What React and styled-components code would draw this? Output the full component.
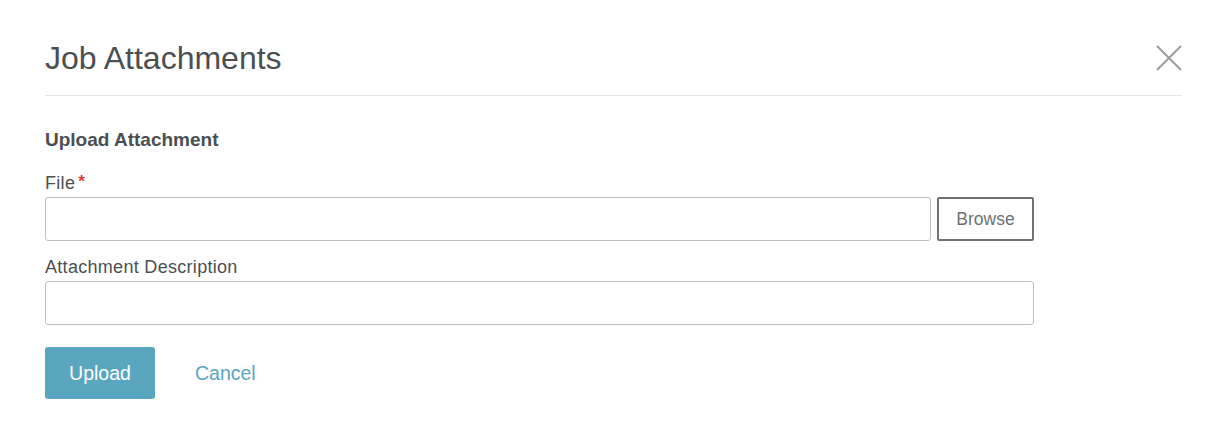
import React from 'react';
import styled, { createGlobalStyle } from 'styled-components';

const GlobalStyle = createGlobalStyle`
  html, body {
    margin: 0;
    padding: 0;
    background: #ffffff;
  }
  body {
    font-family: "Liberation Sans", Arial, sans-serif;
    color: #4b5053;
  }
`;

const Modal = styled.div`
  width: 1210px;
  height: 430px;
  box-sizing: border-box;
  padding: 40px 28px 0 45px;
  background: #fff;
`;

const Header = styled.div`
  display: flex;
  justify-content: space-between;
  align-items: flex-start;
  padding-bottom: 19px;
  border-bottom: 1px solid #e4e5e6;
`;

const Title = styled.h1`
  margin: 0;
  font-size: 32px;
  line-height: 36px;
  font-weight: 400;
  color: #4a4f52;
`;

const CloseButton = styled.button`
  margin: 5px 0 0 0;
  padding: 0;
  border: 0;
  background: none;
  width: 26px;
  height: 26px;
  cursor: pointer;
  display: flex;
`;

const Body = styled.div`
  padding-top: 33px;
  width: 989px;
`;

const SectionTitle = styled.h2`
  margin: 0 0 20px 0;
  font-size: 19px;
  line-height: 22px;
  font-weight: 700;
  color: #4a4f52;
`;

const Field = styled.div`
  margin-top: ${p => p.$gap || 0}px;
`;

const Label = styled.label`
  display: block;
  font-size: 18px;
  letter-spacing: 0.3px;
  line-height: 21px;
  margin-bottom: 3px;
  color: #4b5053;
`;

const Required = styled.span`
  color: #d2453d;
  margin-left: 3px;
  font-size: 17px;
  font-weight: 700;
  vertical-align: 2px;
`;

const Row = styled.div`
  display: flex;
  gap: 6px;
`;

const TextInput = styled.input`
  flex: 1;
  width: 100%;
  height: 44px;
  box-sizing: border-box;
  border: 1px solid #bdbfc0;
  border-radius: 3px;
  padding: 0 12px;
  font-family: inherit;
  font-size: 17px;
  color: #4b5053;
  outline: none;
  display: block;
`;

const BrowseButton = styled.button`
  width: 97px;
  height: 44px;
  flex: none;
  box-sizing: border-box;
  border: 2px solid #6d7275;
  border-radius: 2px;
  background: #fff;
  font-family: inherit;
  font-size: 17.5px;
  color: #6d7275;
  cursor: pointer;
`;

const Actions = styled.div`
  display: flex;
  align-items: center;
  gap: 40px;
  margin-top: 22px;
`;

const PrimaryButton = styled.button`
  width: 110px;
  height: 52px;
  border: 0;
  border-radius: 3px;
  background: #5aa6bf;
  color: #fff;
  font-family: inherit;
  font-size: 19.5px;
  cursor: pointer;
`;

const LinkButton = styled.button`
  border: 0;
  padding: 0;
  background: none;
  color: #5aa6bf;
  font-family: inherit;
  font-size: 19.5px;
  cursor: pointer;
`;

export default function App() {
  return (
    <>
      <GlobalStyle />
      <Modal>
        <Header>
          <Title>Job Attachments</Title>
          <CloseButton aria-label="Close">
            <svg width="26" height="26" viewBox="0 0 26 26">
              <path d="M1 1 L25 25 M25 1 L1 25" stroke="#9a9e9f" strokeWidth="2" fill="none" />
            </svg>
          </CloseButton>
        </Header>
        <Body>
          <SectionTitle>Upload Attachment</SectionTitle>
          <Field>
            <Label>
              File<Required>*</Required>
            </Label>
            <Row>
              <TextInput type="text" />
              <BrowseButton>Browse</BrowseButton>
            </Row>
          </Field>
          <Field $gap={16}>
            <Label>Attachment Description</Label>
            <TextInput type="text" />
          </Field>
          <Actions>
            <PrimaryButton>Upload</PrimaryButton>
            <LinkButton>Cancel</LinkButton>
          </Actions>
        </Body>
      </Modal>
    </>
  );
}
